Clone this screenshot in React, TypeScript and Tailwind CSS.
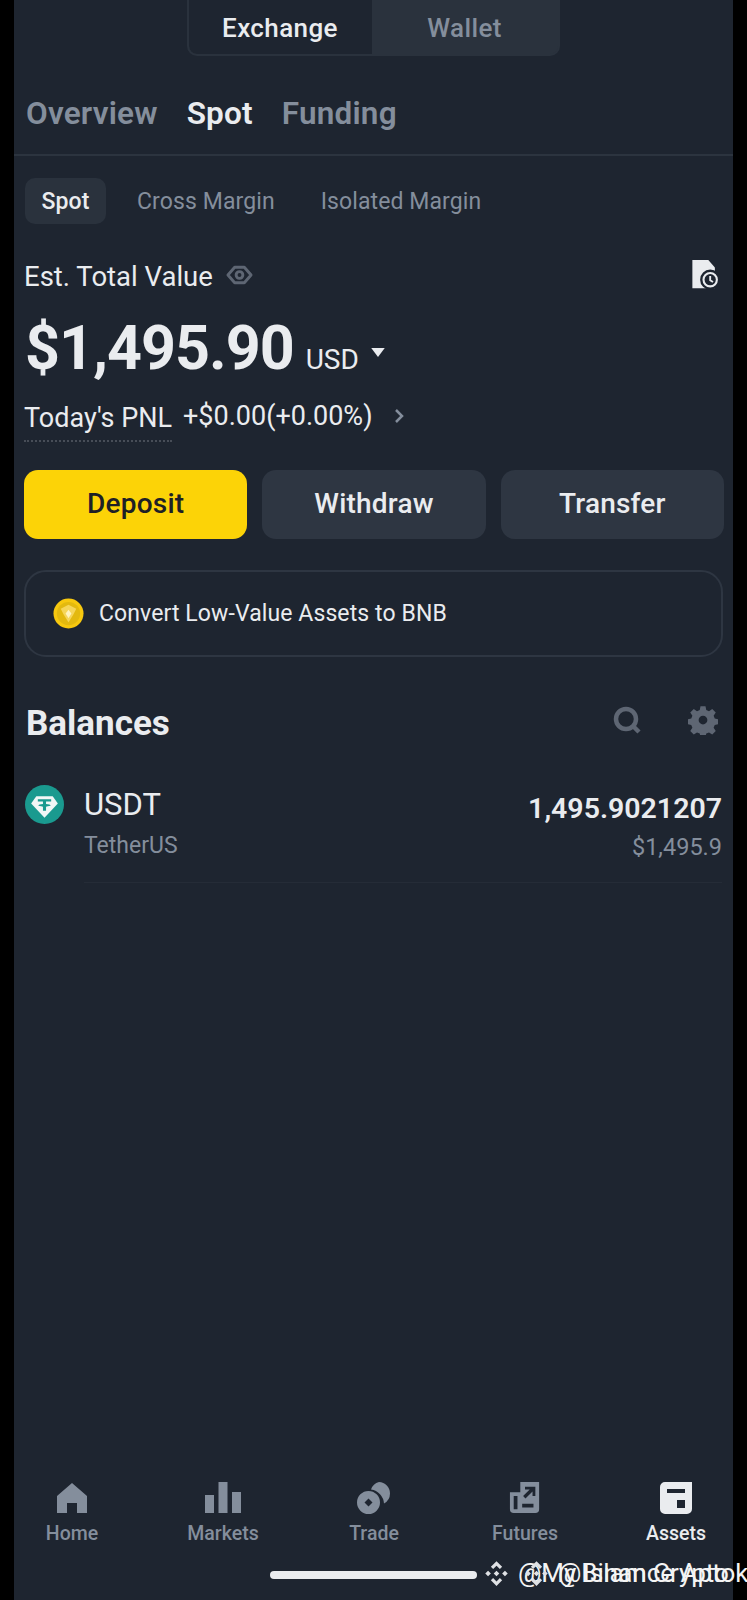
import React from 'react';

const font = { fontFamily: 'Roboto, "Noto Sans", sans-serif' };

function HomeIcon() {
  return (
    <svg viewBox="0 0 32 32" className="w-8 h-8 text-[#848e9c]" fill="currentColor">
      <path fillRule="evenodd" d="M16 1 L31 14 V31 H21 V21 H11 V31 H1 V14 Z" />
    </svg>
  );
}

function MarketsIcon() {
  return (
    <svg viewBox="0 0 36 32" className="w-9 h-8 text-[#848e9c]" fill="currentColor">
      <rect x="0" y="13" width="9" height="18" />
      <rect x="13.500" y="0" width="9" height="31" />
      <rect x="27" y="10" width="9" height="21" />
    </svg>
  );
}

function TradeIcon() {
  return (
    <svg viewBox="0 0 34 34" className="w-[34px] h-[34px] text-[#848e9c]" fill="currentColor">
      <path fillRule="evenodd" d="M11.500 10a11.500 11.500 0 1 1 0 23 11.500 11.500 0 0 1 0-23Zm0 7.500-4 4 4 4 4-4Z" />
      <path d="M22 1a11.500 11.500 0 0 1 11 11.500 11.500 11.500 0 0 1-6 10 15 15 0 0 0-13-14 11.500 11.500 0 0 1 8-7.500Z" />
    </svg>
  );
}

function FuturesIcon() {
  return (
    <svg viewBox="0 0 32 34" className="w-8 h-8 text-[#848e9c]" fill="currentColor">
      <path fillRule="evenodd" d="M11 0H31V29a4 4 0 0 1-4 4H4a4 4 0 0 1-4-4V11H11ZM4 15V29H8V15ZM13 23V27H25V23ZM16 5V8H21L14 15l2.500 2.500L24 10V15H27V5Z" />
    </svg>
  );
}

function AssetsIcon() {
  return (
    <svg viewBox="0 0 32 32" className="w-8 h-8 text-[#eaecef]" fill="currentColor">
      <path fillRule="evenodd" d="M5 0H32V27a5 5 0 0 1-5 5H5a5 5 0 0 1-5-5V5a5 5 0 0 1 5-5ZM7 7V11H25V7ZM17 18V26H25V18Z" />
    </svg>
  );
}

function NavItem({ icon, label, active }: { icon: React.ReactNode; label: string; active?: boolean }) {
  return (
    <div className="flex flex-col items-center w-[80px]">
      <div className="h-[36px] flex items-center justify-center">{icon}</div>
      <span className={`text-[19.5px] leading-[22px] mt-[7px] font-medium ${active ? 'text-[#eaecef]' : 'text-[#848e9c]'}`}>{label}</span>
    </div>
  );
}

function BnbCoin() {
  return (
    <svg viewBox="0 0 32 32" className="w-[31px] h-[31px] shrink-0">
      <circle cx="16" cy="16" r="15.500" fill="#f7c80f" />
      <circle cx="16" cy="16" r="12" fill="#e3b90f" />
      <path d="M8 11 L16 7 L24 11 L21 17 L16 25 L11 17 Z" fill="#f6d65a" />
      <path d="M16 12 L19 16 L16 21 L13 16 Z" fill="#fff3c0" />
    </svg>
  );
}

function TetherCoin() {
  return (
    <svg viewBox="0 0 38 38" className="w-[39px] h-[39px] shrink-0">
      <circle cx="19" cy="19" r="19" fill="#1a9a8f" />
      <path d="M11 11H27L32 18L19 32L6 18Z" fill="#f1f7f6" />
      <path d="M12.500 14H25.500V16H20.500V18.500C23 18.700 25 19.200 25 19.800C25 20.400 23 20.900 20.500 21.100V25H17.500V21.100C15 20.900 13 20.400 13 19.800C13 19.200 15 18.700 17.500 18.500V16H12.500Z" fill="#1a9a8f" />
    </svg>
  );
}

function BinanceMark() {
  return (
    <svg viewBox="0 0 24 24" className="w-[27px] h-[27px] shrink-0 text-[#dfe1e4]" fill="currentColor">
      <path d="M12 1 7 6l2 2 3-3 3 3 2-2ZM4.500 9.500 2 12l2.500 2.500L7 12ZM19.500 9.500 17 12l2.500 2.500L22 12ZM12 9.500 9.500 12l2.500 2.500 2.500-2.500ZM9 16l-2 2 5 5 5-5-2-2-3 3Z" />
    </svg>
  );
}

export default function App() {
  return (
    <div className="relative w-[747px] h-[1600px] bg-black flex justify-center overflow-hidden" style={font}>
      <div className="w-[719px] h-full bg-[#1e2530] flex flex-col">
        {/* Exchange / Wallet */}
        <div className="flex justify-center pr-[1px]">
          <div className="flex w-[373px] h-[56px] bg-[#2a323d] rounded-b-[10px] overflow-hidden border-2 border-t-0 border-[#2a323d]">
            <div className="w-[183px] pt-[2px] bg-[#1e2530] flex items-center justify-center rounded-bl-[8px] text-[26px] tracking-[0.4px] text-[#eaecef] font-medium">Exchange</div>
            <div className="flex-1 pt-[2px] flex items-center justify-center text-[26px] tracking-[0.4px] text-[#848e9c] font-medium">Wallet</div>
          </div>
        </div>

        {/* Top tabs */}
        <div className="flex items-center gap-[29px] pl-[12px] h-[100px] border-b-2 border-[#2c343f] text-[31.5px] tracking-[0.2px] font-semibold pt-[18px]">
          <span className="text-[#848e9c]">Overview</span>
          <span className="text-[#eaecef]">Spot</span>
          <span className="text-[#848e9c]">Funding</span>
        </div>

        {/* Sub tabs */}
        <div className="flex items-center pl-[11px] mt-[22px] text-[23px] tracking-[0.1px]">
          <span className="flex items-center justify-center w-[81px] h-[46px] pt-[3px] rounded-[10px] bg-[#2a323d] text-[#eaecef] font-medium">Spot</span>
          <span className="text-[#848e9c] ml-[31px] pt-[3px]">Cross Margin</span>
          <span className="text-[#848e9c] ml-[46px] pt-[3px]">Isolated Margin</span>
        </div>

        {/* Total value */}
        <div className="flex items-center justify-between pl-[10px] pr-[14px] mt-[32px]">
          <div className="flex items-center gap-[13px]">
            <span className="text-[27.5px] text-[#eaecef] leading-[42px]">Est. Total Value</span>
            <svg viewBox="0 0 28 22" className="w-[27px] h-[22px] text-[#5e6673] -mt-[4px]" fill="none" stroke="currentColor" strokeWidth="3">
              <path d="M2 11 L9 3 H19 L26 11 L19 19 H9 Z" strokeLinejoin="round" />
              <circle cx="14" cy="11" r="3.500" />
            </svg>
          </div>
          <svg viewBox="0 0 28 32" className="w-[27px] h-[30px] -mt-[4px]">
            <path d="M0 0H17L24 8V30H0Z" fill="#eaecef" />
            <circle cx="19" cy="21" r="9.500" fill="#eaecef" stroke="#1e2530" strokeWidth="2.500" />
            <circle cx="19" cy="21" r="6" fill="#1e2530" />
            <path d="M19 17V21.500L22 23.500" stroke="#eaecef" strokeWidth="2" fill="none" />
          </svg>
        </div>

        <div className="flex items-baseline pl-[11px] mt-[15px]">
          <span className="text-[61px] leading-[70px] font-bold text-[#eaecef] tracking-[-1px]">$1,495.90</span>
          <span className="text-[28px] text-[#eaecef] ml-[12px]">USD</span>
          <svg viewBox="0 0 12 8" className="w-[14px] h-[9px] ml-[12px] self-center mt-[8px] text-[#eaecef]" fill="currentColor">
            <path d="M0 0H12L6 8Z" />
          </svg>
        </div>

        <div className="flex items-center pl-[10px] mt-[13px] text-[27px] text-[#eaecef]">
          <span className="border-b-2 border-dotted border-[#474d57] leading-[44px] mb-[-6px]">Today's PNL</span>
          <span className="ml-[11px]">+$0.00(+0.00%)</span>
          <svg viewBox="0 0 10 16" className="w-[10px] h-[16px] ml-[21px] text-[#848e9c]" fill="none" stroke="currentColor" strokeWidth="2.500">
            <path d="M2 2L8 8L2 14" />
          </svg>
        </div>

        {/* Actions */}
        <div className="grid grid-cols-3 gap-[15px] pl-[10px] pr-[9px] mt-[33px] text-[28px] tracking-[0.2px] font-medium">
          <div className="h-[69px] rounded-[14px] bg-[#fcd307] text-[#1e2026] flex items-center justify-center">Deposit</div>
          <div className="h-[69px] rounded-[14px] bg-[#2e3642] text-[#eaecef] flex items-center justify-center">Withdraw</div>
          <div className="h-[69px] rounded-[14px] bg-[#2e3642] text-[#eaecef] flex items-center justify-center">Transfer</div>
        </div>

        {/* Convert banner */}
        <div className="flex items-center gap-[15px] ml-[10px] mr-[10px] mt-[31px] h-[87px] rounded-[22px] border-2 border-[#2e3642] pl-[27px] text-[23px] tracking-[0.1px] text-[#eaecef]">
          <BnbCoin />
          <span className="pt-[3px]">Convert Low-Value Assets to BNB</span>
        </div>

        {/* Balances */}
        <div className="flex items-center justify-between pl-[12px] pr-[14px] mt-[45px]">
          <span className="text-[35px] leading-[44px] font-bold text-[#eaecef]">Balances</span>
          <div className="flex items-center gap-[47px] pr-[1px] text-[#5e6673] -mt-[7px]">
            <svg viewBox="0 0 28 28" className="w-[28px] h-[28px]" fill="none" stroke="currentColor" strokeWidth="4.500">
              <circle cx="13" cy="13" r="10" />
              <path d="M20 20L26 26" />
            </svg>
            <svg viewBox="0 0 24 24" className="w-[30px] h-[30px]" fill="currentColor">
              <path fillRule="evenodd" d="M10 1h4l.6 3 2.200.9 2.600-1.700 2.800 2.800-1.700 2.600.9 2.200 3 .6v4l-3 .6-.9 2.200 1.700 2.600-2.800 2.800-2.600-1.700-2.200.9-.6 3h-4l-.6-3-2.200-.9-2.600 1.700-2.800-2.800 1.700-2.600-.9-2.200-3-.6v-4l3-.6.9-2.200-1.700-2.600 2.800-2.800 2.600 1.700 2.200-.9ZM12 8.500a3.500 3.500 0 1 0 0 7 3.500 3.500 0 0 0 0-7Z" />
            </svg>
          </div>
        </div>

        {/* Coin row */}
        <div className="flex items-start pl-[11px] pr-[11px] mt-[39px]">
          <TetherCoin />
          <div className="ml-[20px] flex flex-col">
            <span className="text-[31px] leading-[40px] text-[#eaecef]">USDT</span>
            <span className="text-[23px] leading-[28px] text-[#848e9c] mt-[7px]">TetherUS</span>
          </div>
          <div className="ml-auto flex flex-col items-end mt-[4px]">
            <span className="text-[28.5px] leading-[40px] text-[#eaecef] font-semibold">1,495.9021207</span>
            <span className="text-[23.5px] leading-[28px] text-[#848e9c] mt-[4px]">$1,495.9</span>
          </div>
        </div>
        <div className="ml-[70px] mr-[11px] mt-[21px] border-b border-[#252c37]" />

        {/* Bottom nav */}
        <div className="mt-auto flex justify-between pl-[18px] pr-[17px] pb-[55px]">
          <NavItem icon={<HomeIcon />} label="Home" />
          <NavItem icon={<MarketsIcon />} label="Markets" />
          <NavItem icon={<TradeIcon />} label="Trade" />
          <NavItem icon={<FuturesIcon />} label="Futures" />
          <NavItem icon={<AssetsIcon />} label="Assets" active />
        </div>
      </div>

      {/* Home indicator */}
      <div className="absolute left-[270px] top-[1571px] w-[207px] h-[8px] rounded-full bg-[#eaecef]" />

      {/* Overlapping watermarks */}
      <div className="absolute left-[483px] top-[1558px] flex items-center gap-[8px] text-[#f4f4f4] text-[26px] leading-[30px] whitespace-nowrap">
        <BinanceMark />
        <span>@My Islam Crypto</span>
      </div>
      <div className="absolute left-[523px] top-[1558px] flex items-center gap-[8px] text-[#f4f4f4] text-[26px] leading-[30px] whitespace-nowrap">
        <BinanceMark />
        <span>@Binance Aptok</span>
      </div>
    </div>
  );
}
